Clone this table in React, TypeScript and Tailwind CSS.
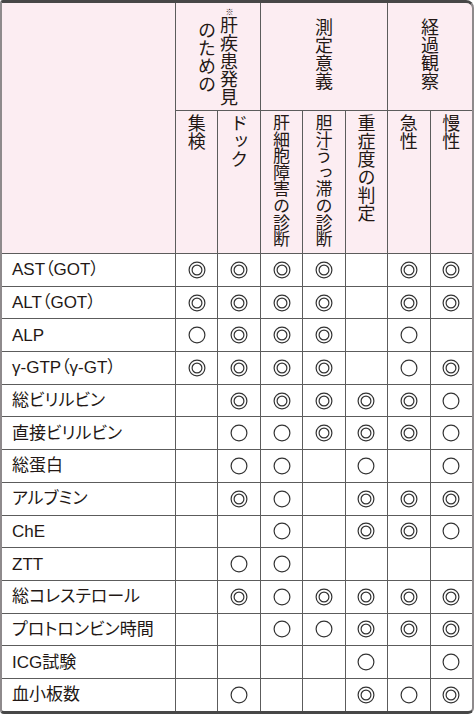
import React from "react";

type V = 0 | 1 | 2;

const rows: [string, V[]][] = [
  ["AST（GOT）", [2, 2, 2, 2, 0, 2, 2]],
  ["ALT（GOT）", [2, 2, 2, 2, 0, 2, 2]],
  ["ALP", [1, 2, 2, 2, 0, 1, 0]],
  ["γ-GTP（γ-GT）", [2, 2, 2, 2, 0, 1, 2]],
  ["総ビリルビン", [0, 2, 2, 2, 2, 2, 1]],
  ["直接ビリルビン", [0, 1, 1, 2, 2, 2, 1]],
  ["総蛋白", [0, 1, 1, 0, 1, 0, 1]],
  ["アルブミン", [0, 2, 1, 0, 2, 2, 2]],
  ["ChE", [0, 0, 1, 0, 2, 2, 1]],
  ["ZTT", [0, 1, 1, 0, 0, 0, 0]],
  ["総コレステロール", [0, 2, 1, 2, 2, 2, 2]],
  ["プロトロンビン時間", [0, 0, 1, 1, 2, 2, 2]],
  ["ICG試験", [0, 0, 0, 0, 1, 0, 1]],
  ["血小板数", [0, 1, 0, 0, 2, 1, 2]],
];

function Mark({ v }: { v: V }) {
  if (!v) return null;
  return (
    <svg width="18" height="18" viewBox="0 0 18 18">
      <circle cx="9" cy="9" r="7.9" fill="none" stroke="#333" strokeWidth="1.2" />
      {v === 2 && <circle cx="9" cy="9" r="4.9" fill="none" stroke="#333" strokeWidth="1.2" />}
    </svg>
  );
}

function Sub({ text, tight }: { text: string; tight?: boolean }) {
  return (
    <div className="bg-[#fcedf2] flex justify-center items-start pt-[3px]">
      <div
        className={
          "[writing-mode:vertical-rl] whitespace-nowrap leading-none text-[#231815] font-['Noto_Sans_CJK_JP',sans-serif] [font-feature-settings:normal] " +
          (tight ? "text-[17px] tracking-[-0.4px]" : "text-[18px]")
        }
      >
        {text}
      </div>
    </div>
  );
}

export default function App() {
  return (
    <div className="w-[474px] h-[714px] bg-white select-none caret-transparent font-['Liberation_Sans','Noto_Sans_CJK_JP',sans-serif] [font-feature-settings:'palt']">
      <div className="grid grid-cols-[173px_repeat(7,1fr)] grid-rows-[107px_142px_repeat(14,31.7px)] gap-px bg-[#5c5c5c] border-t-[3px] border-b-[3px] border-x-2 border-t-[#474747] border-b-[#474747] border-x-[#8e8a8c] rounded-tr-[8px] rounded-br-[6px] rounded-tl-[3px] rounded-bl-[4px] overflow-hidden">
        <div className="row-span-2 bg-[#fcedf2]" />
        <div className="col-span-2 bg-[#fcedf2] flex items-center justify-center">
          <div className="[writing-mode:vertical-rl] whitespace-nowrap text-[18px] leading-[22px] text-center text-[#231815] font-['Noto_Sans_CJK_JP',sans-serif] [font-feature-settings:normal]">
            <span className="text-[8px]">※</span>肝疾患発見
            <br />
            のための
          </div>
        </div>
        <div className="col-span-3 bg-[#fcedf2] flex items-center justify-center pb-[6px]">
          <div className="[writing-mode:vertical-rl] text-[18px] leading-none text-[#231815] font-['Noto_Sans_CJK_JP',sans-serif] [font-feature-settings:normal]">
            測定意義
          </div>
        </div>
        <div className="col-span-2 bg-[#fcedf2] flex items-center justify-center pb-[6px]">
          <div className="[writing-mode:vertical-rl] text-[18px] leading-none text-[#231815] font-['Noto_Sans_CJK_JP',sans-serif] [font-feature-settings:normal]">
            経過観察
          </div>
        </div>
        <Sub text="集検" />
        <Sub text="ドック" />
        <Sub text="肝細胞障害の診断" tight />
        <Sub text="胆汁うっ滞の診断" tight />
        <Sub text="重症度の判定" />
        <Sub text="急性" />
        <Sub text="慢性" />
        {rows.map(([label, vals]) => (
          <React.Fragment key={label}>
            <div className="bg-white flex items-center pl-[10px] text-[17px] leading-none text-[#231815] whitespace-nowrap">
              {label}
            </div>
            {vals.map((v, i) => (
              <div key={i} className="bg-white flex items-center justify-center">
                <Mark v={v} />
              </div>
            ))}
          </React.Fragment>
        ))}
      </div>
    </div>
  );
}
